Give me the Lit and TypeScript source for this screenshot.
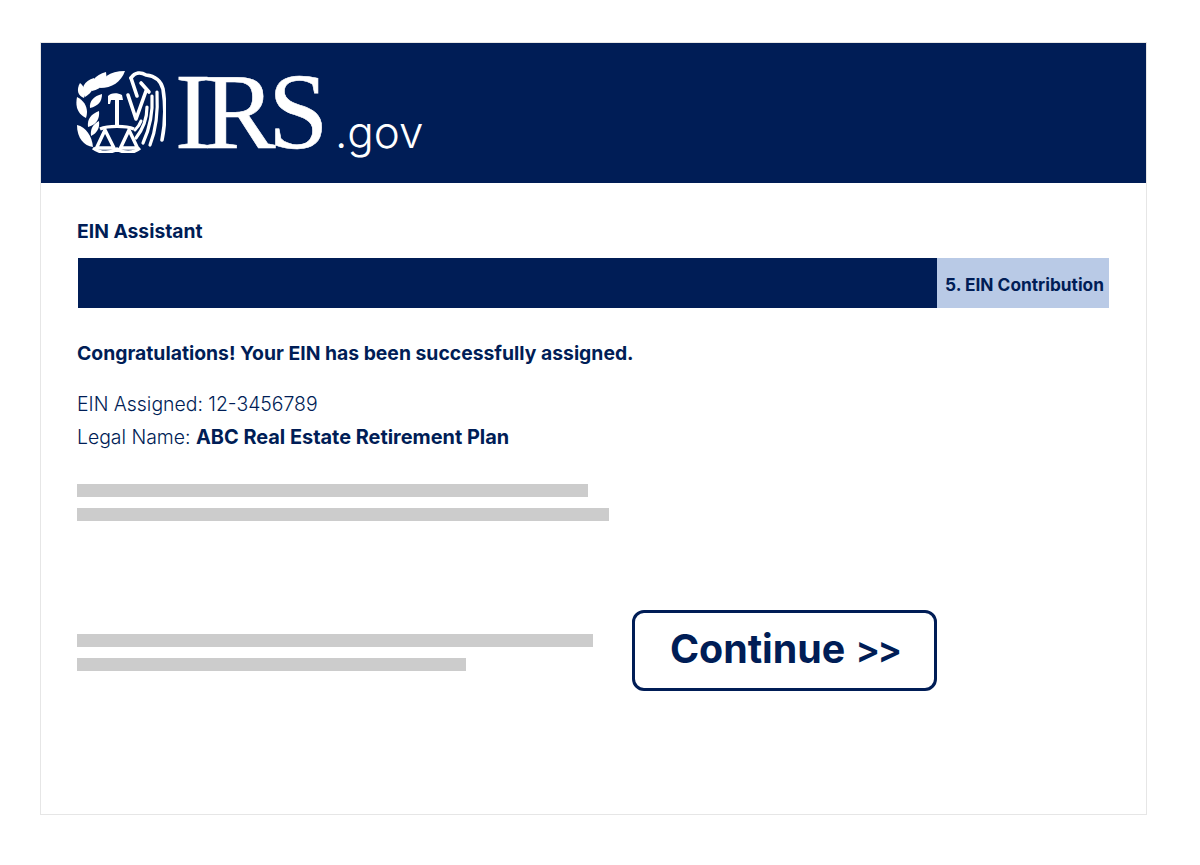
import { LitElement, html, css, svg } from "lit";
import { customElement } from "lit/decorators.js";

const leaf = (d: string) => svg`<path d=${d} fill="#fff"/>`;

const emblem = html`<svg class="emblem" viewBox="76 72 90 82" aria-hidden="true">
  ${leaf("M100 89C101 79 109 72 125 72C121 83 112 89 100 89Z")}
  ${leaf("M92 92C89 83 95 76 106 73C108 83 102 90 92 92Z")}
  ${leaf("M85 98C80 89 84 82 94 79C96 87 92 94 85 98Z")}
  ${leaf("M84 99C78 97 76 91 80 84C85 88 86 94 84 99Z")}
  ${leaf("M90 109C89 102 94 97 102 95C102 103 98 107 90 109Z")}
  ${leaf("M86 119C78 115 75 108 77 98C85 102 89 110 86 119Z")}
  ${leaf("M88 128C87 120 91 115 99 112C100 120 96 126 88 128Z")}
  ${leaf("M93 148C84 147 77 139 77 126C86 128 92 137 93 148Z")}
  ${leaf("M91 137C90 130 93 125 99 122C100 129 97 134 91 137Z")}
  <g fill="none" stroke="#fff" stroke-width="3.4" stroke-linejoin="round">
    <path d="M105 131L96.5 149H114Z"/>
    <path d="M129 131L120.5 149H137.5Z"/>
    <path d="M100 130C108 126.500 126 126.500 134 130"/>
    <path d="M93 149C101 155 111 154 117 150C123 154 133 155 140 149"/>
  </g>
  <path d="M108 97C110 94 117 93 122 96L123 101H119V127H115V101H111L110 105H108Z" fill="#fff"/>
  <g fill="none" stroke="#fff" stroke-linecap="round" stroke-linejoin="round">
    <path stroke-width="3.600" d="M131 79C135 73 141 73 146 76C155 77 161 82 163 90C165.500 106 165 126 162 141"/>
    <path stroke-width="3.600" d="M131 79L137 97"/>
    <path stroke-width="3.600" d="M128 96L136 120L146 92"/>
    <path stroke-width="3.600" d="M141 84L149 93"/>
    <path stroke-width="3.200" d="M157 93C158 111 156 131 150 146"/>
    <path stroke-width="3.200" d="M152 97C153 113 149 131 143 144"/>
    <path stroke-width="3.200" d="M147 108C147 119 143 130 136 139"/>
    <path stroke-width="3" d="M141 122C140 125 138 128 135 131"/>
  </g>
</svg>`;

@customElement("app-root")
export class AppRoot extends LitElement {
  static styles = css`
    :host {
      display: block;
      width: 1200px;
      height: 865px;
      padding: 42px 0 0 40px;
      box-sizing: border-box;
      background: #fff;
      color: #001d56;
      font-family: "Inter", "Open Sans", sans-serif;
    }
    .card {
      width: 1107px;
      height: 773px;
      box-sizing: border-box;
      border: 1px solid #e6e6e6;
      background: #fff;
    }
    .banner {
      height: 140px;
      background: #001d56;
      display: flex;
      align-items: flex-start;
      padding: 28px 0 0 35px;
      box-sizing: border-box;
      color: #fff;
    }
    .emblem { width: 90px; height: 82px; flex: none; }
    .irs {
      font-family: "Liberation Serif", serif;
      font-size: 108px;
      line-height: 80px;
      letter-spacing: -7.4px;
      margin: 1px 0 0 9px;
      -webkit-text-stroke: 0.6px #fff;
    }
    .gov {
      font-size: 44px;
      font-weight: 350;
      line-height: 50px;
      margin: 36px 0 0 14px;
    }
    .content { padding: 35px 36px 0 36px; }
    h1, h2, p { margin: 0; }
    h1 { font-size: 19.3px; font-weight: 700; line-height: 26px; }
    .progress {
      display: flex;
      height: 50px;
      margin: 14px 0 0 1px;
      width: 1031px;
    }
    .fill { flex: 1; background: #001d56; }
    .step {
      width: 172px;
      background: #b9cae6;
      display: flex;
      align-items: center;
      box-sizing: border-box;
      padding: 3px 0 0 8px;
      font-size: 17.3px;
      font-weight: 700;
      white-space: nowrap;
    }
    h2 { font-size: 19.35px; font-weight: 700; line-height: 26px; margin-top: 32px; }
    .line { font-size: 19.4px; font-weight: 300; line-height: 26px; }
    .line b { font-weight: 700; font-size: 19.9px; }
    .assigned { margin-top: 25px; }
    .legal { margin-top: 7px; }
    .bars { display: flex; flex-direction: column; gap: 11px; }
    .bar { height: 13px; background: #ccc; }
    .first { margin-top: 34px; }
    .w510 { width: 511px; }
    .w531 { width: 532px; }
    .w515 { width: 516px; }
    .w388 { width: 389px; }
    .row { display: flex; align-items: center; margin-top: 89px; gap: 39px; }
    .row .bars { width: 516px; margin-top: 4px; }
    button {
      width: 305px;
      height: 81px;
      box-sizing: border-box;
      border: 3px solid #001d56;
      border-radius: 12px;
      background: #fff;
      color: #001d56;
      font: 700 39.4px "Inter", sans-serif;
      padding: 0 0 3px;
      display: flex;
      align-items: center;
      justify-content: center;
      gap: 10px;
    }
    .arrows { font-size: 37px; font-weight: 600; letter-spacing: -3px; }
  `;

  render() {
    return html`<div class="card">
      <header class="banner">
        ${emblem}
        <span class="irs">IRS</span>
        <span class="gov">.gov</span>
      </header>
      <main class="content">
        <h1>EIN Assistant</h1>
        <div class="progress">
          <div class="fill"></div>
          <div class="step">5. EIN Contribution</div>
        </div>
        <h2>Congratulations! Your EIN has been successfully assigned.</h2>
        <p class="line assigned">EIN Assigned: 12-3456789</p>
        <p class="line legal">Legal Name: <b>ABC Real Estate Retirement Plan</b></p>
        <div class="bars first">
          <div class="bar w510"></div>
          <div class="bar w531"></div>
        </div>
        <div class="row">
          <div class="bars">
            <div class="bar w515"></div>
            <div class="bar w388"></div>
          </div>
          <button><span>Continue</span><span class="arrows">&gt;&gt;</span></button>
        </div>
      </main>
    </div>`;
  }
}
